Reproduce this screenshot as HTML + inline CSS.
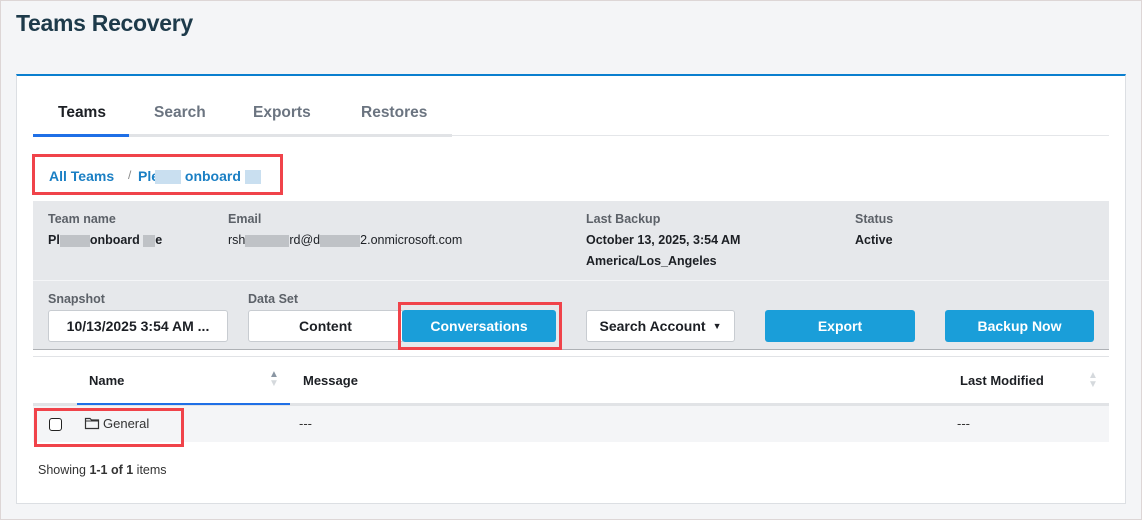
<!DOCTYPE html>
<html><head><meta charset="utf-8"><style>
*{box-sizing:border-box;margin:0;padding:0}
html,body{width:1142px;height:520px}
body{background:#f4f5f7;font-family:"Liberation Sans",sans-serif;position:relative;overflow:hidden;box-shadow:inset 0 0 0 1px #ddd6d6}
.a{position:absolute;white-space:nowrap}
h1{position:absolute;left:16px;top:10px;font-size:23px;font-weight:bold;color:#1d3a4a;letter-spacing:-0.3px}
.card{position:absolute;left:16px;top:74px;width:1110px;height:430px;background:#fff;border:1px solid #dcdfe3;border-top:2px solid #0a7fcf}
.tab{position:absolute;top:104px;font-size:15.5px;font-weight:bold;color:#6b7480}
.lbl{font-size:12.5px;font-weight:bold;color:#5c6168}
.val{font-size:12.5px;font-weight:bold;color:#1c1f24}
.btn{position:absolute;height:32px;border-radius:3px;font-size:14px;font-weight:bold;display:flex;align-items:center;justify-content:center}
.w{background:#fff;border:1px solid #c8ccd1;color:#1c1f24}
.b{background:#1a9ed9;color:#fff}
.red{position:absolute;border:3px solid #f0434a}
.blur{display:inline-block;background:#c9dff0;height:14px;vertical-align:middle}
.gblur{display:inline-block;background:#bfc2c6;height:12px;vertical-align:middle}
</style></head><body>
<h1>Teams Recovery</h1>
<div class="card"></div>
<div class="tab" style="left:58px;color:#1c1f24">Teams</div>
<div class="tab" style="left:154px">Search</div>
<div class="tab" style="left:253px">Exports</div>
<div class="tab" style="left:361px">Restores</div>
<div class="a" style="left:33px;top:134px;width:419px;height:3px;background:#e1e3e6"></div>
<div class="a" style="left:452px;top:135px;width:657px;height:1px;background:#e4e6e9"></div>
<div class="a" style="left:33px;top:134px;width:96px;height:3px;background:#1f6fe6"></div>

<div class="a" style="left:49px;top:168px;font-size:14px;font-weight:bold;color:#1a7fc4">All Teams</div>
<div class="a" style="left:128px;top:168px;font-size:12px;color:#888">/</div>
<div class="a" style="left:138px;top:168px;font-size:14px;font-weight:bold;color:#1a7fc4">Ple<span class="blur" style="width:26px;margin-left:-4px"></span> onboard <span class="blur" style="width:16px"></span></div>
<div class="red" style="left:32px;top:154px;width:251px;height:41px"></div>

<div class="a" style="left:33px;top:201px;width:1076px;height:149px;background:#e6e8eb;border-bottom:1px solid #aeb1b5"></div>
<div class="a" style="left:33px;top:280px;width:1076px;height:1px;background:#f4f5f7"></div>
<div class="a" style="left:33px;top:356px;width:1076px;height:1px;background:#e1e3e6"></div>
<div class="a lbl" style="left:48px;top:212px">Team name</div>
<div class="a val" style="left:48px;top:233px">Pl<span class="gblur" style="width:30px"></span>onboard <span class="gblur" style="width:12px"></span>e</div>
<div class="a lbl" style="left:228px;top:212px">Email</div>
<div class="a val" style="left:228px;top:233px;font-weight:normal;color:#1c1f24">rsh<span class="gblur" style="width:44px"></span>rd@d<span class="gblur" style="width:40px"></span>2.onmicrosoft.com</div>
<div class="a lbl" style="left:586px;top:212px">Last Backup</div>
<div class="a val" style="left:586px;top:233px">October 13, 2025, 3:54 AM</div>
<div class="a val" style="left:586px;top:254px">America/Los_Angeles</div>
<div class="a lbl" style="left:855px;top:212px">Status</div>
<div class="a val" style="left:855px;top:233px">Active</div>

<div class="a lbl" style="left:48px;top:292px">Snapshot</div>
<div class="a lbl" style="left:248px;top:292px">Data Set</div>
<div class="btn w" style="left:48px;top:310px;width:180px">10/13/2025 3:54 AM ...</div>
<div class="btn w" style="left:248px;top:310px;width:155px;border-radius:3px 0 0 3px">Content</div>
<div class="btn b" style="left:402px;top:310px;width:154px">Conversations</div>
<div class="red" style="left:398px;top:302px;width:164px;height:48px"></div>
<div class="btn w" style="left:586px;top:310px;width:149px">Search Account <span style="font-size:9px;margin-left:7px">&#9660;</span></div>
<div class="btn b" style="left:765px;top:310px;width:150px">Export</div>
<div class="btn b" style="left:945px;top:310px;width:149px">Backup Now</div>

<div class="a" style="left:89px;top:373px;font-size:13px;font-weight:bold;color:#1c1f24">Name</div>
<div class="a" style="left:269px;top:370px;font-size:10px;color:#8a96a3;line-height:9px">&#9650;<br><span style="color:#d5d9dd">&#9660;</span></div>
<div class="a" style="left:303px;top:373px;font-size:13px;font-weight:bold;color:#1c1f24">Message</div>
<div class="a" style="left:960px;top:373px;font-size:13px;font-weight:bold;color:#1c1f24">Last Modified</div>
<div class="a" style="left:1088px;top:371px;font-size:10px;color:#d5d9dd;line-height:9px">&#9650;<br>&#9660;</div>
<div class="a" style="left:33px;top:403px;width:1076px;height:3px;background:#e1e3e6"></div>
<div class="a" style="left:77px;top:403px;width:213px;height:2px;background:#1f6fe6"></div>
<div class="a" style="left:33px;top:406px;width:1076px;height:36px;background:#f4f5f7"></div>
<div class="a" style="left:49px;top:418px;width:13px;height:13px;border:1.5px solid #222;border-radius:3px;background:#fff"></div>
<svg class="a" style="left:84px;top:416px" width="16" height="14" viewBox="0 0 16 14"><path d="M1.5 2.5h4.5l1.5 1.5h7v8.5h-13z" fill="none" stroke="#333" stroke-width="1.2"/><path d="M1.5 5h13" stroke="#333" stroke-width="1"/></svg>
<div class="a" style="left:103px;top:416px;font-size:13px;color:#333">General</div>
<div class="red" style="left:34px;top:408px;width:150px;height:39px"></div>
<div class="a" style="left:299px;top:416px;font-size:13px;color:#333">---</div>
<div class="a" style="left:957px;top:416px;font-size:13px;color:#333">---</div>
<div class="a" style="left:38px;top:463px;font-size:12.5px;color:#333">Showing <b>1-1 of 1</b> items</div>
</body></html>
